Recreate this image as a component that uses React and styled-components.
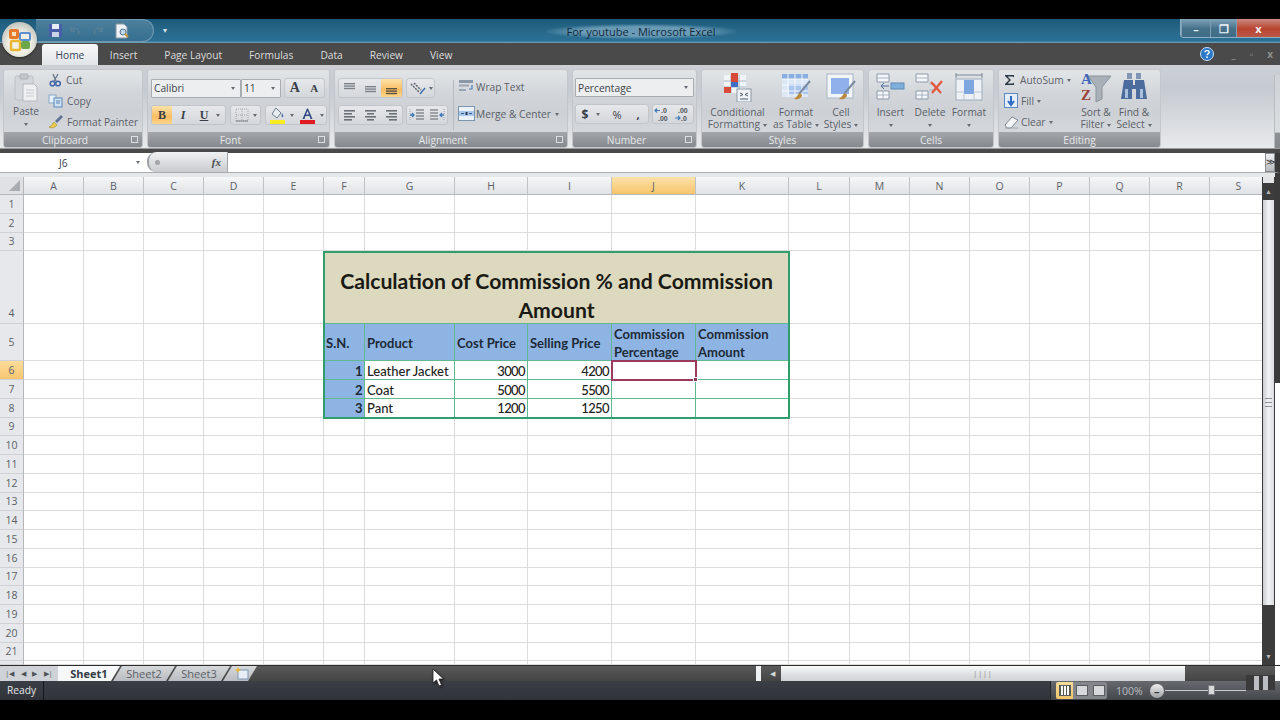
import styled, { createGlobalStyle, css } from "styled-components";

const GlobalStyle = createGlobalStyle`
  html, body {
    margin: 0;
    padding: 0;
    background: #000;
    overflow: hidden;
  }
  * {
    box-sizing: border-box;
  }
`;

const uiFont = `"Open Sans", "Noto Sans", "Liberation Sans", sans-serif`;
const cellFont = `Lato, "Open Sans", "Liberation Sans", sans-serif`;

const COLS = ["A", "B", "C", "D", "E", "F", "G", "H", "I", "J", "K", "L", "M", "N", "O", "P", "Q", "R", "S"];
const gridCols = "24px repeat(5, 60px) 41px 90px 73px 84px 84px 93px 61px repeat(5, 60px) 60px 58px";
const gridRows = "18px repeat(3, 18.75px) 72.5px 37.5px repeat(3, 18.75px) repeat(13, 18.75px) 3.75px";

const tableRows = {
  5: ["S.N.", "Product", "Cost Price", "Selling Price", "Commission Percentage", "Commission Amount"],
  6: ["1", "Leather Jacket", "3000", "4200", "", ""],
  7: ["2", "Coat", "5000", "5500", "", ""],
  8: ["3", "Pant", "1200", "1250", "", ""],
};

/* ---------- icons ---------- */

const OfficeLogo = () => (
  <svg width="26" height="26" viewBox="0 0 26 26">
    <rect x="2" y="2" width="10" height="10" rx="2" fill="#e8792b" />
    <rect x="13" y="6" width="10" height="7" rx="1" fill="none" stroke="#5b8fd0" strokeWidth="2" />
    <rect x="4" y="14" width="9" height="9" rx="1" fill="none" stroke="#e9b72f" strokeWidth="2.4" />
    <rect x="14" y="14" width="9" height="8" rx="2" fill="#6aa84a" />
    <rect x="5" y="5" width="4" height="4" fill="#f7e1c0" />
  </svg>
);

const SaveIcon = () => (
  <svg width="15" height="15" viewBox="0 0 15 15">
    <rect x="1" y="1" width="13" height="13" rx="1" fill="#4a5da8" />
    <rect x="4" y="1" width="7" height="5" fill="#e8ecf4" />
    <rect x="4" y="9" width="7" height="5" fill="#c9d2e6" />
  </svg>
);

const UndoIcon = ({ flip }) => (
  <svg width="14" height="14" viewBox="0 0 14 14" style={flip ? { transform: "scaleX(-1)" } : undefined}>
    <path d="M3 6c3-3 7-2 8 2l-1 3M3 3v4h4" fill="none" stroke="#5d8199" strokeWidth="1.5" />
  </svg>
);

const PreviewIcon = () => (
  <svg width="16" height="16" viewBox="0 0 16 16">
    <path d="M2 1h8l3 3v11H2z" fill="#eef2f6" stroke="#8a97a4" />
    <circle cx="9" cy="9" r="3" fill="#bcd6ea" stroke="#5b7388" />
    <path d="M11 11l3 3" stroke="#c89a3c" strokeWidth="2" />
  </svg>
);

const Caret = styled.span`
  display: inline-block;
  width: 0;
  height: 0;
  border-left: 2.5px solid transparent;
  border-right: 2.5px solid transparent;
  border-top: 3px solid #666c74;
  margin-left: ${(p) => p.$gap || 0}px;
  margin-top: ${(p) => p.$top || 0}px;
  vertical-align: middle;
`;

const PasteIcon = () => (
  <svg width="24" height="29" viewBox="0 0 24 29">
    <rect x="1" y="3" width="18" height="24" rx="2" fill="#d3d6da" stroke="#bcc0c5" />
    <rect x="6" y="1" width="8" height="5" rx="1" fill="#c3c6cb" stroke="#aeb2b7" />
    <path d="M9 11h11l3 3v14H9z" fill="#eef0f2" stroke="#b5b9be" />
    <path d="M12 17h8M12 20h8M12 23h8" stroke="#c6c9cd" />
  </svg>
);

const CutIcon = () => (
  <svg width="14" height="14" viewBox="0 0 14 14">
    <path d="M5 1l3 7M10 1L6 8" stroke="#6d7c8c" strokeWidth="1.4" />
    <circle cx="4.5" cy="10.5" r="2.3" fill="none" stroke="#4768a8" strokeWidth="1.6" />
    <circle cx="10" cy="10.5" r="2.3" fill="none" stroke="#4768a8" strokeWidth="1.6" />
  </svg>
);

const CopyIcon = () => (
  <svg width="15" height="14" viewBox="0 0 15 14">
    <rect x="1" y="1" width="7" height="8" fill="#e6f0fa" stroke="#8aa8c8" />
    <rect x="6" y="4" width="8" height="9" fill="#cfe0f2" stroke="#5c88b8" />
    <path d="M8 7h4M8 9h4" stroke="#5c88b8" />
  </svg>
);

const PainterIcon = () => (
  <svg width="15" height="15" viewBox="0 0 15 15">
    <path d="M1 13c3-.5 3-3 5-5l3 3c-2 2-4 4-8 2z" fill="#ecc948" stroke="#a88a2a" strokeWidth=".6" />
    <path d="M7 7l6-6 2 2-6 6z" fill="#5f7396" />
  </svg>
);

const BordersIcon = () => (
  <svg width="14" height="14" viewBox="0 0 14 14">
    <rect x="1" y="1" width="12" height="12" fill="none" stroke="#a3a8ae" strokeDasharray="1 1" />
    <path d="M7 1v12M1 7h12" stroke="#a3a8ae" strokeDasharray="1 1" />
    <path d="M1 13h12" stroke="#7d8288" />
  </svg>
);

const FillIcon = () => (
  <svg width="17" height="17" viewBox="0 0 17 17">
    <path d="M7 1l5 5-4 5-5-4z" fill="#e8edf2" stroke="#6b7a8a" />
    <path d="M13 6c1 2 2 3 1 4s-2-1-1-4z" fill="#4a6fa8" />
    <rect x="1" y="13" width="15" height="4" fill="#f6ec1e" />
  </svg>
);

const FontColorIcon = () => (
  <svg width="17" height="17" viewBox="0 0 17 17">
    <path d="M3.500 12L8 1.500h1L13.500 12h-2l-1-3h-4l-1 3zM7 7.500h3L8.500 4z" fill="#2f4a82" />
    <rect x="1" y="13" width="15" height="4" fill="#e01b24" />
  </svg>
);

const Lines = ({ kind }) => {
  const rows = {
    left: [[2, 11], [2, 8], [2, 11], [2, 8]],
    center: [[2, 11], [4, 7], [2, 11], [4, 7]],
    right: [[2, 11], [5, 8], [2, 11], [5, 8]],
  }[kind];
  return (
    <svg width="15" height="13" viewBox="0 0 15 13">
      {rows.map(([x, w], i) => (
        <rect key={i} x={x} y={1 + i * 3} width={w} height="1.6" fill="#6c7278" />
      ))}
    </svg>
  );
};

const VAlign = ({ at }) => (
  <svg width="15" height="13" viewBox="0 0 15 13">
    {[0, 1, 2].map((i) => (
      <rect key={i} x="2" y={at + i * 2.4} width="11" height="1.4" fill={at > 4 ? "#5b5340" : "#7c8288"} />
    ))}
  </svg>
);

const OrientIcon = () => (
  <svg width="18" height="15" viewBox="0 0 18 15">
    <path d="M2 3l8 8M5 2l7 7" stroke="#5f6670" strokeWidth="1.5" strokeDasharray="2 1" />
    <path d="M11 13l5-6" stroke="#3d6fb0" strokeWidth="1.4" />
  </svg>
);

const IndentIcon = ({ flip }) => (
  <svg width="16" height="14" viewBox="0 0 16 14" style={flip ? { transform: "scaleX(-1)" } : undefined}>
    <path d="M7 2h8M7 5h8M7 8h8M7 11h8" stroke="#5c6269" />
    <path d="M1 7h4M3 5l2 2-2 2" stroke="#3f79b8" fill="none" strokeWidth="1.3" />
    <path d="M1 1v12" stroke="#9aa0a6" strokeDasharray="1 1" />
  </svg>
);

const WrapIcon = () => (
  <svg width="17" height="15" viewBox="0 0 17 15">
    <rect x="1" y="1" width="14" height="3" fill="#8c98a8" />
    <rect x="1" y="5.5" width="10" height="2" fill="#9aa5b2" />
    <rect x="1" y="10" width="7" height="2" fill="#9aa5b2" />
    <path d="M11 10h3V6" fill="none" stroke="#4a7ab0" strokeWidth="1.2" />
  </svg>
);

const MergeIcon = () => (
  <svg width="17" height="15" viewBox="0 0 17 15">
    <rect x=".5" y=".5" width="16" height="14" fill="#eaf1f8" stroke="#7e94ac" />
    <rect x="1" y="5" width="15" height="5" fill="#a9c7e6" />
    <path d="M3 7.500h3M14 7.500h-3" stroke="#2c5c96" />
    <rect x="7.5" y="6" width="2" height="3" fill="#27394f" />
  </svg>
);

const DecIcon = ({ more }) => (
  <svg width="18" height="16" viewBox="0 0 18 16" fontFamily="Liberation Sans, sans-serif" fontSize="7" fontWeight="700" fill="#50565c">
    <text x={more ? 7 : 4} y="7">{more ? ".0" : ".00"}</text>
    <text x={more ? 4 : 7} y="15">{more ? ".00" : ".0"}</text>
    <path d={more ? "M1 4.500h5M3 2.500l-2 2 2 2" : "M1 12h5M4 10l2 2-2 2"} stroke="#3f79b8" fill="none" strokeWidth="1.2" />
  </svg>
);

const ConditionalIcon = () => (
  <svg width="30" height="30" viewBox="0 0 30 30">
    <path d="M1 3h22v18H1z" fill="#f1f4f8" />
    <path d="M1 9h22M1 15h22M8 3v18M16 3v18" stroke="#a9b6c6" />
    <rect x="8" y="1" width="7" height="9" fill="#d84a3a" />
    <rect x="8" y="10" width="7" height="5" fill="#3f6fc0" />
    <rect x="1" y="15" width="7" height="6" fill="#d84a3a" />
    <rect x="14" y="17" width="14" height="13" fill="#eef2f6" stroke="#8b98a6" />
    <path d="M17 21l3 1.500-3 1.500M25 21l-3 1.500 3 1.500M17 27h8" stroke="#4d5a68" fill="none" />
  </svg>
);

const TableIcon = () => (
  <svg width="30" height="30" viewBox="0 0 30 30">
    <rect x="1" y="2" width="26" height="23" fill="#dce8f6" />
    <rect x="1" y="2" width="26" height="5" fill="#8aaee0" />
    <rect x="8" y="12" width="19" height="10" fill="#a9c6ee" />
    <path d="M1 7h26M1 13h26M1 19h26M7 2v23M14 2v23M21 2v23" stroke="#f4f7fb" />
    <path d="M29 9L18 22" stroke="#7a8aa0" strokeWidth="2" />
    <path d="M19 21c-2 1-3 4-6 6 4 1 8-1 8-4z" fill="#b9893c" />
  </svg>
);

const CellStylesIcon = () => (
  <svg width="30" height="30" viewBox="0 0 30 30">
    <rect x="1" y="2" width="26" height="24" fill="#f2f5f9" stroke="#a9b6c6" />
    <rect x="5" y="6" width="18" height="16" fill="#8fb0ea" />
    <path d="M29 9L18 22" stroke="#7a8aa0" strokeWidth="2" />
    <path d="M19 21c-2 1-3 4-6 6 4 1 8-1 8-4z" fill="#b9893c" />
  </svg>
);

const InsertIcon = () => (
  <svg width="30" height="30" viewBox="0 0 30 30">
    <path d="M1 2h12v8H1zM1 19h12v8H1z" fill="#f4f6f9" stroke="#8d99a8" />
    <path d="M1 6h12M1 23h12M7 19v8" stroke="#a8b4c2" />
    <rect x="15" y="11" width="13" height="6" fill="#7fb0dc" stroke="#5c8bb8" />
    <path d="M5 14h8M8 11l-3 3 3 3" fill="none" stroke="#4c6f98" />
  </svg>
);

const DeleteIcon = () => (
  <svg width="30" height="30" viewBox="0 0 30 30">
    <path d="M1 2h12v8H1zM1 19h12v8H1z" fill="#f4f6f9" stroke="#8d99a8" />
    <path d="M1 6h12M1 23h12M7 19v8M14 12h6v6h-6" fill="none" stroke="#a8b4c2" />
    <path d="M16 10l10 11M27 9L17 21" stroke="#e4573d" strokeWidth="2.2" />
  </svg>
);

const FormatIcon = () => (
  <svg width="30" height="30" viewBox="0 0 30 30">
    <path d="M2 1v5M28 1v5M2 3h26" stroke="#7b8896" fill="none" />
    <rect x="2" y="7" width="26" height="21" fill="#eef2f7" stroke="#9eabba" />
    <rect x="10" y="8" width="10" height="14" fill="#7da5de" />
    <path d="M2 20h8M20 20h8M10 22v6M20 22v6" stroke="#b8c3d0" />
  </svg>
);

const SigmaIcon = () => (
  <svg width="11" height="12" viewBox="0 0 11 12">
    <path d="M1 1h9v2.500L9 2.500H3.500L7 6l-3.500 3.500H9l1-1.200V11H1v-1l4-4-4-4z" fill="#2c3640" />
  </svg>
);

const FillDownIcon = () => (
  <svg width="14" height="15" viewBox="0 0 14 15">
    <rect x=".5" y=".5" width="13" height="14" fill="#e4eefa" stroke="#5d8ac2" />
    <path d="M7 3v7M4 8l3 4 3-4" fill="none" stroke="#2c6cc4" strokeWidth="2" />
  </svg>
);

const EraserIcon = () => (
  <svg width="15" height="14" viewBox="0 0 15 14">
    <path d="M1 10l7-8 6 3-7 8H3z" fill="#f4f5f7" stroke="#7c8792" />
    <path d="M1 13h13" stroke="#a1a8b0" />
  </svg>
);

const SortIcon = () => (
  <svg width="32" height="32" viewBox="0 0 32 32">
    <path d="M8 5h23l-9 11v12l-6 3V16z" fill="#a9b0b8" stroke="#8d949c" />
    <text x="1" y="13" fontFamily="Liberation Serif, serif" fontWeight="700" fontSize="15" fill="#3e67b8">A</text>
    <text x="1" y="29" fontFamily="Liberation Serif, serif" fontWeight="700" fontSize="15" fill="#9c4238">Z</text>
  </svg>
);

const BinocularsIcon = () => (
  <svg width="28" height="30" viewBox="0 0 28 30">
    <path d="M7 1h5v6H7zM16 1h5v6h-5z" fill="#8196b4" />
    <path d="M4 8h9v5h2V8h9l3 19H16V17h-4v10H1z" fill="#4b6c9c" />
    <rect x="5" y="17" width="3" height="9" fill="#a8c0de" />
    <rect x="20" y="17" width="3" height="9" fill="#a8c0de" />
  </svg>
);

const HelpIcon = () => (
  <svg width="14" height="14" viewBox="0 0 14 14">
    <circle cx="7" cy="7" r="6.500" fill="#2a78c8" stroke="#c5def6" />
    <path d="M5 5.300c0-2.300 4.200-2.300 4.200 0 0 1.600-2.200 1.400-2.200 3" fill="none" stroke="#fff" strokeWidth="1.400" />
    <rect x="6.2" y="9.4" width="1.6" height="1.6" fill="#fff" />
  </svg>
);

const NewSheetIcon = () => (
  <svg width="14" height="13" viewBox="0 0 14 13">
    <rect x="3" y="3" width="10" height="9" fill="#e8eef6" stroke="#7f97b8" />
    <path d="M3 0l1 2 2 1-2 1-1 2-1-2-2-1 2-1z" fill="#e8b83a" />
  </svg>
);

const ArrowCursor = styled.svg`
  position: absolute;
  left: 432px;
  top: 668px;
  filter: drop-shadow(1px 1px 1px rgba(0, 0, 0, 0.5));
`;

/* ---------- window chrome ---------- */

const Screen = styled.div`
  position: relative;
  width: 1280px;
  height: 720px;
  background: #000;
  overflow: hidden;
  display: flex;
  flex-direction: column;
  font-family: ${uiFont};
`;

const BlackBar = styled.div`
  flex: none;
  height: ${(p) => p.$h}px;
  background: #000;
`;

const TitleBar = styled.div`
  flex: none;
  height: 24px;
  display: flex;
  align-items: center;
  background: linear-gradient(180deg, #1c5a7a 0%, #28698b 55%, #2a7096 92%, #7fa9bf 100%);
  padding-left: 36px;
`;

const QuickAccess = styled.div`
  flex: none;
  width: 118px;
  height: 23px;
  margin-top: -1px;
  display: flex;
  align-items: center;
  gap: 5px;
  padding-left: 12px;
  background: linear-gradient(180deg, #4d7f9c, #356f90);
  border-radius: 0 13px 13px 0;
  border: 1px solid #6f9ab2;
  border-left: none;

  & > svg:nth-child(2),
  & > svg:nth-child(3) {
    opacity: 0.75;
    margin-right: 4px;
  }
`;

const QuickMenu = styled.div`
  flex: none;
  width: 22px;
  text-align: center;
  color: #d6e2ea;
  font-size: 8px;
  line-height: 8px;
  margin-top: -2px;
`;

const WindowTitle = styled.div`
  flex: none;
  width: 190px;
  margin-left: 370px;
  text-align: center;
  font-size: 11px;
  color: #14293a;
  background: radial-gradient(ellipse at center, rgba(150, 190, 212, 0.6) 45%, rgba(150, 190, 212, 0) 74%);
  white-space: nowrap;
`;

const WindowButtons = styled.div`
  margin-left: auto;
  align-self: flex-start;
  display: flex;
  height: 19px;
  border: 1px solid #8fb0c4;
  border-top: none;
  border-right: none;
  border-radius: 0 0 0 4px;
  overflow: hidden;
`;

const WindowButton = styled.div`
  width: ${(p) => p.$w}px;
  display: flex;
  align-items: center;
  justify-content: center;
  color: #eef2f5;
  font-size: 11px;
  font-weight: 700;
  background: ${(p) =>
    p.$close
      ? "linear-gradient(180deg, #c98a80, #b9432f 55%, #b85a48)"
      : "linear-gradient(180deg, #7fa3b8, #45708a 55%, #3f6c86)"};
  border-left: 1px solid #7fa0b4;
`;

const TabBar = styled.div`
  flex: none;
  height: 22px;
  display: flex;
  align-items: flex-end;
  background: #4a4a4a;
  padding-left: 42px;
`;

const Tab = styled.div`
  padding: 0 13.5px;
  height: 21px;
  line-height: 22px;
  font-size: 10.2px;
  color: #dcdcdc;
  ${(p) =>
    p.$active &&
    css`
      color: #37465a;
      background: linear-gradient(180deg, #f7f8f9, #e2e5e8);
      border-radius: 3px 3px 0 0;
      margin-right: -1.5px;
    `}
`;

const TabTools = styled.div`
  margin-left: auto;
  display: flex;
  align-items: center;
  gap: 14px;
  height: 22px;
  padding-right: 7px;
  color: #8e8e8e;
  font-size: 10px;
  font-weight: 700;

  & > svg {
    margin-right: 4px;
  }
`;

const Ribbon = styled.div`
  flex: none;
  height: 84px;
  display: flex;
  gap: 4px;
  padding: 4px 0 0 3px;
  background: linear-gradient(180deg, #ccd0d5 0%, #c6cbd1 30%, #e8eaec 100%);
  border-bottom: 1px solid #9a9da1;
`;

const Group = styled.div`
  flex: none;
  width: ${(p) => p.$w}px;
  height: 79px;
  display: flex;
  flex-direction: column;
  border-radius: 3px;
  overflow: hidden;
  border: 1px solid #c3c7cc;
  background: linear-gradient(180deg, #e2e5e8 0%, #d2d6da 30%, #cdd1d5 55%, #dadde0 100%);
`;

const GroupBody = styled.div`
  flex: 1;
  display: flex;
  min-height: 0;
  padding: ${(p) => p.$pad || "0"};
  gap: ${(p) => p.$gap || 0}px;
`;

const GroupLabel = styled.div`
  position: relative;
  flex: none;
  height: 15px;
  line-height: 16px;
  padding-right: ${(p) => (p.$launcher ? 16 : 0)}px;
  text-align: center;
  font-size: 10.2px;
  color: #e6e8ea;
  background: linear-gradient(180deg, #a3a7ab, #85898e);
`;

const Launcher = styled.span`
  position: absolute;
  right: 4px;
  top: 4px;
  width: 7px;
  height: 7px;
  border: 1px solid #dcdfe2;
  background: #8f9499;
`;

const RibbonEdge = styled.div`
  margin-left: auto;
  width: 6px;
  height: 73px;
  margin-top: 6px;
  border-left: 1px solid #b9bdc2;
  background: linear-gradient(180deg, #cfd3d7 0%, #dadde0 78%, #8d9195 80%, #85898e 100%);
`;

const Stack = styled.div`
  display: flex;
  flex-direction: column;
  gap: ${(p) => p.$gap || 0}px;
  margin-top: ${(p) => p.$top || 0}px;
`;

const Row = styled.div`
  display: flex;
  align-items: center;
  gap: ${(p) => p.$gap || 0}px;
`;

const ToolText = styled.span`
  font-size: 10.2px;
  line-height: 12px;
  color: #5b6068;
  white-space: nowrap;
  margin-top: ${(p) => p.$top || 0}px;
`;

const SmallTool = styled.div`
  display: flex;
  align-items: center;
  height: 21px;
  gap: ${(p) => p.$gap ?? 4}px;
  width: ${(p) => (p.$w ? `${p.$w}px` : "auto")};
  & > svg {
    flex: none;
  }
`;

const BigTool = styled.div`
  flex: none;
  width: ${(p) => p.$w}px;
  display: flex;
  flex-direction: column;
  align-items: center;
  padding-top: ${(p) => p.$top ?? 2}px;
`;

const BigIconSlot = styled.div`
  height: 30px;
  display: flex;
  align-items: center;
  justify-content: center;
`;

const BigLabel = styled.div`
  margin-top: 4px;
  font-size: 10.2px;
  line-height: 12px;
  color: #5b6068;
  text-align: center;
  white-space: nowrap;
`;

const ComboBox = styled.div`
  width: ${(p) => p.$w}px;
  height: 19px;
  flex: none;
  display: flex;
  align-items: center;
  justify-content: space-between;
  padding: 0 5px 0 2px;
  font-size: 10.2px;
  color: #3d434a;
  border: 1px solid #a9adb2;
  background: #eceef0;
  border-radius: 1px;
`;

const ButtonCluster = styled.div`
  display: flex;
  align-items: stretch;
  height: 20px;
  width: ${(p) => (p.$w ? `${p.$w}px` : "auto")};
  margin-left: ${(p) => p.$ml || 0}px;
  border: 1px solid #c2c6cb;
  border-radius: 3px;
  background: linear-gradient(180deg, #e6e8eb, #d4d7db);
  overflow: hidden;
`;

const ClusterButton = styled.div`
  flex: ${(p) => (p.$w ? "none" : "1")};
  width: ${(p) => (p.$w ? `${p.$w}px` : "auto")};
  display: flex;
  align-items: center;
  justify-content: center;
  gap: 2px;
  font-size: ${(p) => p.$size || 11}px;
  font-weight: ${(p) => (p.$bold ? 700 : 400)};
  font-style: ${(p) => (p.$italic ? "italic" : "normal")};
  text-decoration: ${(p) => (p.$under ? "underline" : "none")};
  font-family: ${(p) => (p.$serif ? `"Liberation Serif", serif` : "inherit")};
  color: #3a4048;
  ${(p) =>
    p.$on &&
    css`
      background: linear-gradient(180deg, #fde3a8, #f9bd62 60%, #fbd58c);
    `}
`;

const GroupDivider = styled.div`
  width: 1px;
  height: 50px;
  margin: 2px 4px 0 5px;
  background: #b7bbc0;
`;

/* ---------- formula bar ---------- */

const DarkStrip = styled.div`
  flex: none;
  height: 4px;
  background: #4a4a4a;
`;

const FormulaBar = styled.div`
  flex: none;
  height: 20px;
  display: flex;
  background: #fff;
  border-bottom: 1px solid #a9abae;
  border-right: 5px solid #3a3a3a;
`;

const NameBox = styled.div`
  width: 147px;
  display: flex;
  align-items: center;
  justify-content: space-between;
  padding: 0 7px 0 59px;
  font-size: 10.2px;
  color: #3d434a;
`;

const FxBox = styled.div`
  width: 81px;
  margin-top: -1px;
  display: flex;
  align-items: center;
  justify-content: space-between;
  padding: 0 6px;
  background: linear-gradient(180deg, #f0f1f2, #c9cbce);
  border-radius: 9px 0 0 9px;
  border-left: 2px solid #9da1a5;
  border-right: 1px solid #a4a7aa;
  font-family: "Liberation Serif", serif;
  font-style: italic;
  font-weight: 700;
  font-size: 11px;
  color: #454a50;

  &::before {
    content: "";
    width: 5px;
    height: 5px;
    border-radius: 50%;
    background: #a3a6a9;
  }
`;

const FormulaInput = styled.div`
  flex: 1;
`;

const FormulaExpand = styled.div`
  flex: none;
  width: 10px;
  background: linear-gradient(180deg, #f0f1f2, #b7babd);
  border: 1px solid #8a8d91;
  font-size: 9px;
  line-height: 15px;
  text-align: center;
  color: #333;
`;

const HeaderGap = styled.div`
  flex: none;
  height: 4px;
  background: #e6e7e9;
  border-right: 5px solid #3a3a3a;
`;

/* ---------- sheet ---------- */

const SheetArea = styled.div`
  flex: none;
  height: 488px;
  display: flex;
  background: #fff;
`;

const SheetStack = styled.div`
  flex: none;
  width: 1262px;
  display: grid;
  overflow: hidden;
`;

const CellGrid = styled.div`
  grid-area: 1 / 1;
  display: grid;
  grid-template-columns: ${gridCols};
  grid-template-rows: ${gridRows};
  font-family: ${cellFont};
`;

const FrameGrid = styled(CellGrid)`
  pointer-events: none;
`;

const TableFrame = styled.div`
  grid-column: 7 / 13;
  grid-row: 5 / 10;
  margin: 0 -1px -1px -1px;
  border: 2px solid #2f9e6c;
`;

const SelectedFrame = styled.div`
  position: relative;
  grid-column: 11 / 12;
  grid-row: 7 / 8;
  margin: -1px;
  border: 2px solid #9a3b5e;
`;

const FillHandle = styled.span`
  position: absolute;
  right: -3px;
  bottom: -3px;
  width: 5px;
  height: 5px;
  background: #8a3556;
  border: 1px solid #fff;
`;

const Corner = styled.div`
  background: #dfe1e4;
  border-right: 1px solid #b4b6b9;
  border-bottom: 1px solid #b4b6b9;
  display: flex;
  align-items: flex-end;
  justify-content: flex-end;
  padding: 0 3px 3px 0;

  &::after {
    content: "";
    width: 0;
    height: 0;
    border-left: 11px solid transparent;
    border-bottom: 11px solid #a9acb0;
  }
`;

const ColHead = styled.div`
  display: flex;
  align-items: center;
  justify-content: center;
  font-family: ${uiFont};
  font-size: 10.5px;
  color: #5c6168;
  border-right: 1px solid #bfc1c4;
  border-bottom: 1px solid #b4b6b9;
  background: ${(p) =>
    p.$on
      ? "linear-gradient(180deg, #fbe2a8, #f7c46c)"
      : "linear-gradient(180deg, #f6f7f8, #e0e2e5)"};
`;

const RowHead = styled.div`
  display: flex;
  align-items: ${(p) => (p.$low ? "flex-end" : "center")};
  justify-content: center;
  padding-bottom: ${(p) => (p.$low ? 3 : 0)}px;
  font-family: ${uiFont};
  font-size: 10.5px;
  color: #5c6168;
  border-right: 1px solid #b4b6b9;
  border-bottom: 1px solid #cfd1d4;
  background: ${(p) => (p.$on ? "linear-gradient(180deg, #fbdc9a, #f8c670)" : "#e6e8eb")};
`;

const Cell = styled.div`
  min-width: 0;
  border-right: 1px solid #dcdcdc;
  border-bottom: 1px solid #dcdcdc;
`;

const TableCell = styled.div`
  min-width: 0;
  display: flex;
  align-items: center;
  justify-content: ${(p) => (p.$num ? "flex-end" : "flex-start")};
  padding: 2px 2px 0;
  font-size: 13px;
  line-height: 18.5px;
  font-weight: ${(p) => (p.$bold ? 700 : 500)};
  letter-spacing: ${(p) => (p.$num ? "-0.6px" : "0")};
  color: ${(p) => (p.$bold ? "#1d2a38" : "#222")};
  background: ${(p) => (p.$blue ? "#8db4e2" : "#fff")};
  border-right: 1px solid #62b98f;
  border-bottom: 1px solid #62b98f;
  white-space: ${(p) => (p.$wrapped ? "normal" : "nowrap")};
`;

const TitleCell = styled.div`
  grid-column: span 6;
  display: flex;
  align-items: center;
  justify-content: center;
  padding: 18px 14px 0;
  text-align: center;
  font-size: 21.2px;
  line-height: 29px;
  font-weight: 700;
  color: #1a1a14;
  background: #dcd9bf;
  border-bottom: 1px solid #62b98f;
`;

/* ---------- scrollbars and status ---------- */

const VScroll = styled.div`
  flex: none;
  width: 13px;
  display: flex;
  flex-direction: column;
  background: #3c3c3c;
`;

const ScrollSplit = styled.div`
  flex: none;
  height: 6px;
  margin: 0 1px;
  background: #e4e5e7;
`;

const ScrollArrow = styled.div`
  flex: none;
  height: 17px;
  display: flex;
  align-items: center;
  justify-content: center;
  color: #b6b8bb;
  font-size: 7px;
`;

const VThumb = styled.div`
  flex: none;
  height: 405px;
  margin: 0 1px;
  display: flex;
  align-items: center;
  justify-content: center;
  background: linear-gradient(90deg, #c9ccd0, #f2f3f4 50%, #d9dbde);

  &::after {
    content: "";
    width: 7px;
    height: 7px;
    border-top: 1px solid #8e9195;
    border-bottom: 1px solid #8e9195;
    background: linear-gradient(#fff0 40%, #8e9195 40%, #8e9195 60%, #fff0 60%);
  }
`;

const VRest = styled.div`
  flex: 1;
  display: flex;
  align-items: flex-end;
  justify-content: center;
`;

const SideEdge = styled.div`
  flex: none;
  width: 5px;
  display: flex;
  flex-direction: column;
`;

const EdgeDark = styled.div`
  height: 206px;
  background: #3a3a3a;
`;

const EdgeLight = styled.div`
  flex: 1;
  background: #fff;
`;

const SheetTabsRow = styled.div`
  flex: none;
  height: 16px;
  display: flex;
  align-items: stretch;
  background: linear-gradient(180deg, #5a5a5a, #444);
  border-top: 1px solid #2c2c2c;
`;

const TabNav = styled.div`
  width: 58px;
  display: flex;
  align-items: center;
  justify-content: space-around;
  padding: 0 2px;
  background: #cfd2d6;
  font-size: 7px;
  color: #4e5358;
`;

const SheetTab = styled.div`
  display: flex;
  align-items: center;
  justify-content: center;
  width: ${(p) => p.$w}px;
  padding-left: ${(p) => p.$pl || 0}px;
  margin-right: -7px;
  font-size: 11px;
  font-weight: ${(p) => (p.$active ? 700 : 400)};
  color: ${(p) => (p.$active ? "#333b44" : "#5b6168")};
  background: ${(p) => (p.$active ? "#f6f7f8" : "linear-gradient(180deg, #d6d8db, #b9bcc0)")};
  clip-path: polygon(0 0, 100% 0, calc(100% - 9px) 100%, 0 100%);
  position: relative;
  z-index: ${(p) => (p.$active ? 2 : 1)};
  ${(p) =>
    !p.$active &&
    css`
      clip-path: polygon(9px 0, 100% 0, calc(100% - 9px) 100%, 0 100%);
    `}
`;

const TabSpacer = styled.div`
  width: ${(p) => p.$w}px;
  flex: none;
`;

const HSplitter = styled.div`
  flex: none;
  width: 5px;
  margin: 0 3px;
  background: #f0f1f2;
`;

const HArrow = styled.div`
  flex: none;
  width: 17px;
  display: flex;
  align-items: center;
  justify-content: center;
  color: #d6d8da;
  font-size: 7px;
`;

const HThumb = styled.div`
  flex: none;
  width: 404px;
  display: flex;
  align-items: center;
  justify-content: center;
  background: linear-gradient(180deg, #fafafa, #dcdee0 60%, #cfd1d4);
  color: #7f8387;
  font-size: 7px;
  letter-spacing: 1px;
`;

const HRest = styled.div`
  flex: 1;
`;

const StatusBar = styled.div`
  flex: none;
  height: 19px;
  display: flex;
  align-items: stretch;
  background: linear-gradient(180deg, #3a3f45, #30343a);
`;

const StatusText = styled.div`
  width: 44px;
  padding-left: 7px;
  line-height: 19px;
  font-size: 10.2px;
  color: #e3e5e7;
  border-right: 1px solid #14171a;
`;

const StatusRight = styled.div`
  margin-left: auto;
  width: 230px;
  display: flex;
  align-items: center;
  padding-left: 5px;
  gap: 9px;
  background: linear-gradient(180deg, #66696d, #43474c);
  border-left: 1px solid #22262a;
`;

const ViewButtons = styled.div`
  display: flex;
  height: 17px;
  border-radius: 2px;
  overflow: hidden;
  background: #83868a;
`;

const ViewButton = styled.div`
  width: 17px;
  display: flex;
  align-items: center;
  justify-content: center;
  background: ${(p) => (p.$on ? "linear-gradient(180deg, #f6dc9a, #eec468)" : "transparent")};

  &::after {
    content: "";
    width: 10px;
    height: 9px;
    background: ${(p) => (p.$on ? "repeating-linear-gradient(90deg, #5c5a4a 0 1px, #fff 1px 3px)" : "#d6d8da")};
    border: 1px solid #595c60;
  }
`;

const ZoomText = styled.div`
  font-size: 10.5px;
  color: #b9bcbf;
`;

const ZoomButton = styled.div`
  width: 14px;
  height: 14px;
  margin-left: -2px;
  border-radius: 50%;
  display: flex;
  align-items: center;
  justify-content: center;
  background: linear-gradient(180deg, #eee, #9fa2a6);
  color: #333;
  font-size: 11px;
  line-height: 12px;
  font-weight: 700;
`;

const ZoomTrack = styled.div`
  position: relative;
  flex: 1;
  height: 1px;
  margin: 0 -9px 0 -8px;
  background: #c7c9cc;
`;

const ZoomThumb = styled.span`
  position: absolute;
  left: 43px;
  top: -5px;
  width: 7px;
  height: 10px;
  background: #d6d8da;
  border: 1px solid #797c80;
  border-radius: 1px;
`;

const PauseBlock = styled.div`
  flex: none;
  align-self: flex-start;
  width: 29px;
  height: 15px;
  margin: -6px 5px 0 0;
  display: flex;
  align-items: center;
  justify-content: center;
  gap: 4px;
  background: #3a3a3a;

  &::before,
  &::after {
    content: "";
    width: 5px;
    height: 14px;
    background: #bcbec1;
  }
`;

const OfficeButton = styled.div`
  position: absolute;
  left: 2px;
  top: 22px;
  width: 35px;
  height: 35px;
  border-radius: 50%;
  display: flex;
  align-items: center;
  justify-content: center;
  background: radial-gradient(circle at 50% 60%, #f2f0e6 40%, #b9bcb8 80%, #727a7e 100%);
  box-shadow: 0 1px 2px rgba(0, 0, 0, 0.5);
`;

/* ---------- parts ---------- */

const SheetCells = () => {
  const cells = [];
  const rows = Array.from({ length: 22 }, (_, i) => i + 1);

  cells.push(<Corner key="corner" />);
  COLS.forEach((c) => cells.push(<ColHead key={c} $on={c === "J"}>{c}</ColHead>));

  rows.forEach((r) => {
    cells.push(
      <RowHead key={`h${r}`} $on={r === 6} $low={r === 4}>
        {r < 22 ? r : ""}
      </RowHead>
    );
    COLS.forEach((c, i) => {
      const inTable = i >= 5 && i <= 10;
      if (r === 4 && c === "F") {
        cells.push(<TitleCell key="title">Calculation of Commission % and Commission Amount</TitleCell>);
      } else if (r === 4 && inTable) {
        // covered by the merged title
      } else if (r === 5 && inTable) {
        cells.push(
          <TableCell key={`${c}${r}`} $blue $bold $wrapped={i > 8}>
            {tableRows[5][i - 5]}
          </TableCell>
        );
      } else if (r > 5 && r <= 8 && inTable) {
        const col = i - 5;
        cells.push(
          <TableCell key={`${c}${r}`} $blue={col === 0} $bold={col === 0} $num={col === 0 || col === 2 || col === 3}>
            {tableRows[r][col]}
          </TableCell>
        );
      } else {
        cells.push(<Cell key={`${c}${r}`} />);
      }
    });
  });

  return <CellGrid>{cells}</CellGrid>;
};

const Big = ({ w, icon, lines }) => (
  <BigTool $w={w}>
    <BigIconSlot>{icon}</BigIconSlot>
    <BigLabel>
      {lines[0]}
      <br />
      {lines[1]}
      <Caret $gap={lines[1] ? 3 : 0} />
    </BigLabel>
  </BigTool>
);

const App = () => (
  <Screen>
    <GlobalStyle />
    <BlackBar $h={19} />

    <TitleBar>
      <QuickAccess>
        <SaveIcon />
        <UndoIcon />
        <UndoIcon flip />
        <PreviewIcon />
      </QuickAccess>
      <QuickMenu>▾</QuickMenu>
      <WindowTitle>For youtube - Microsoft Excel</WindowTitle>
      <WindowButtons>
        <WindowButton $w={29}>–</WindowButton>
        <WindowButton $w={26}>❐</WindowButton>
        <WindowButton $w={44} $close>x</WindowButton>
      </WindowButtons>
    </TitleBar>

    <TabBar>
      <Tab $active>Home</Tab>
      <Tab>Insert</Tab>
      <Tab>Page Layout</Tab>
      <Tab>Formulas</Tab>
      <Tab>Data</Tab>
      <Tab>Review</Tab>
      <Tab>View</Tab>
      <TabTools>
        <HelpIcon />
        <span>_</span>
        <span>▫</span>
        <span>x</span>
      </TabTools>
    </TabBar>

    <Ribbon>
      <Group $w={140}>
        <GroupBody>
          <BigTool $w={44} $top={3}>
            <PasteIcon />
            <ToolText $top={3}>Paste</ToolText>
            <Caret $top={6} />
          </BigTool>
          <Stack $top={-1}>
            <SmallTool><CutIcon /><ToolText>Cut</ToolText></SmallTool>
            <SmallTool><CopyIcon /><ToolText>Copy</ToolText></SmallTool>
            <SmallTool><PainterIcon /><ToolText>Format Painter</ToolText></SmallTool>
          </Stack>
        </GroupBody>
        <GroupLabel $launcher>Clipboard<Launcher /></GroupLabel>
      </Group>

      <Group $w={183}>
        <GroupBody $pad="8px 3px 0 3px">
          <Stack $gap={7}>
            <Row>
              <ComboBox $w={90}>Calibri<Caret /></ComboBox>
              <ComboBox $w={40}>11<Caret /></ComboBox>
              <ButtonCluster $w={41} $ml={3}>
                <ClusterButton $serif $bold $size={14}>A</ClusterButton>
                <ClusterButton $serif $bold $size={11}>A</ClusterButton>
              </ButtonCluster>
            </Row>
            <Row>
              <ButtonCluster $w={75}>
                <ClusterButton $w={20} $on $serif $bold $size={12}>B</ClusterButton>
                <ClusterButton $w={22} $serif $italic $bold $size={12}>I</ClusterButton>
                <ClusterButton $w={32} $serif $bold $under $size={12}>U<Caret $gap={6} /></ClusterButton>
              </ButtonCluster>
              <ButtonCluster $w={31} $ml={4}>
                <ClusterButton><BordersIcon /><Caret $gap={2} /></ClusterButton>
              </ButtonCluster>
              <ButtonCluster $w={62} $ml={4}>
                <ClusterButton><FillIcon /><Caret $gap={2} /></ClusterButton>
                <ClusterButton><FontColorIcon /><Caret $gap={2} /></ClusterButton>
              </ButtonCluster>
            </Row>
          </Stack>
        </GroupBody>
        <GroupLabel $launcher>Font<Launcher /></GroupLabel>
      </Group>

      <Group $w={234}>
        <GroupBody $pad="8px 4px 0 3px">
          <Stack $gap={7}>
            <Row>
              <ButtonCluster $w={65}>
                <ClusterButton><VAlign at={1} /></ClusterButton>
                <ClusterButton><VAlign at={4} /></ClusterButton>
                <ClusterButton $on><VAlign at={6} /></ClusterButton>
              </ButtonCluster>
              <ButtonCluster $w={29} $ml={3}>
                <ClusterButton><OrientIcon /><Caret /></ClusterButton>
              </ButtonCluster>
            </Row>
            <Row>
              <ButtonCluster $w={65}>
                <ClusterButton><Lines kind="left" /></ClusterButton>
                <ClusterButton><Lines kind="center" /></ClusterButton>
                <ClusterButton><Lines kind="right" /></ClusterButton>
              </ButtonCluster>
              <ButtonCluster $w={42} $ml={3}>
                <ClusterButton><IndentIcon /></ClusterButton>
                <ClusterButton><IndentIcon flip /></ClusterButton>
              </ButtonCluster>
            </Row>
          </Stack>
          <GroupDivider />
          <Stack $gap={6} $top={-2}>
            <SmallTool $gap={1}><WrapIcon /><ToolText>Wrap Text</ToolText></SmallTool>
            <SmallTool $gap={1}><MergeIcon /><ToolText>Merge &amp; Center<Caret $gap={4} /></ToolText></SmallTool>
          </Stack>
        </GroupBody>
        <GroupLabel $launcher>Alignment<Launcher /></GroupLabel>
      </Group>

      <Group $w={125}>
        <GroupBody $pad="8px 3px 0 2px">
          <Stack $gap={7}>
            <ComboBox $w={119}>Percentage<Caret /></ComboBox>
            <Row>
              <ButtonCluster $w={74}>
                <ClusterButton $w={30} $bold $size={12}>$<Caret $gap={6} /></ClusterButton>
                <ClusterButton $w={22}>%</ClusterButton>
                <ClusterButton $w={20} $bold>,</ClusterButton>
              </ButtonCluster>
              <ButtonCluster $w={42} $ml={3}>
                <ClusterButton><DecIcon more /></ClusterButton>
                <ClusterButton><DecIcon /></ClusterButton>
              </ButtonCluster>
            </Row>
          </Stack>
        </GroupBody>
        <GroupLabel $launcher>Number<Launcher /></GroupLabel>
      </Group>

      <Group $w={163}>
        <GroupBody $pad="0 0 0 1px">
          <Big w={69} icon={<ConditionalIcon />} lines={["Conditional", "Formatting"]} />
          <Big w={48} icon={<TableIcon />} lines={["Format", "as Table"]} />
          <Big w={42} icon={<CellStylesIcon />} lines={["Cell", "Styles"]} />
        </GroupBody>
        <GroupLabel>Styles</GroupLabel>
      </Group>

      <Group $w={126}>
        <GroupBody $pad="0 1px">
          <Big w={41} icon={<InsertIcon />} lines={["Insert", ""]} />
          <Big w={38} icon={<DeleteIcon />} lines={["Delete", ""]} />
          <Big w={40} icon={<FormatIcon />} lines={["Format", ""]} />
        </GroupBody>
        <GroupLabel>Cells</GroupLabel>
      </Group>

      <Group $w={163}>
        <GroupBody $pad="0 0 0 5px">
          <Stack $top={-1}>
            <SmallTool $w={74} $gap={5}><SigmaIcon /><ToolText>AutoSum<Caret $gap={3} /></ToolText></SmallTool>
            <SmallTool $w={74} $gap={3}><FillDownIcon /><ToolText>Fill<Caret $gap={3} /></ToolText></SmallTool>
            <SmallTool $w={74} $gap={2}><EraserIcon /><ToolText>Clear<Caret $gap={3} /></ToolText></SmallTool>
          </Stack>
          <Big w={36} icon={<SortIcon />} lines={["Sort &", "Filter"]} />
          <Big w={40} icon={<BinocularsIcon />} lines={["Find &", "Select"]} />
        </GroupBody>
        <GroupLabel>Editing</GroupLabel>
      </Group>

      <RibbonEdge />
    </Ribbon>

    <DarkStrip />

    <FormulaBar>
      <NameBox>J6<Caret /></NameBox>
      <FxBox>fx</FxBox>
      <FormulaInput />
      <FormulaExpand>≫</FormulaExpand>
    </FormulaBar>

    <HeaderGap />

    <SheetArea>
      <SheetStack>
        <SheetCells />
        <FrameGrid>
          <TableFrame />
          <SelectedFrame><FillHandle /></SelectedFrame>
        </FrameGrid>
      </SheetStack>
      <VScroll>
        <ScrollSplit />
        <ScrollArrow>▲</ScrollArrow>
        <VThumb />
        <VRest><ScrollArrow>▼</ScrollArrow></VRest>
      </VScroll>
      <SideEdge>
        <EdgeDark />
        <EdgeLight />
      </SideEdge>
    </SheetArea>

    <SheetTabsRow>
      <TabNav>
        <span>|◀</span>
        <span>◀</span>
        <span>▶</span>
        <span>▶|</span>
      </TabNav>
      <SheetTab $active $w={62}>Sheet1</SheetTab>
      <SheetTab $w={62}>Sheet2</SheetTab>
      <SheetTab $w={62}>Sheet3</SheetTab>
      <SheetTab $w={34} $pl={4}><NewSheetIcon /></SheetTab>
      <TabSpacer $w={503} />
      <HSplitter />
      <HArrow>◀</HArrow>
      <HThumb>||||</HThumb>
      <HRest />
      <SideEdge><EdgeLight /></SideEdge>
    </SheetTabsRow>

    <StatusBar>
      <StatusText>Ready</StatusText>
      <StatusRight>
        <ViewButtons>
          <ViewButton $on />
          <ViewButton />
          <ViewButton />
        </ViewButtons>
        <ZoomText>100%</ZoomText>
        <ZoomButton>–</ZoomButton>
        <ZoomTrack><ZoomThumb /></ZoomTrack>
        <PauseBlock />
      </StatusRight>
    </StatusBar>

    <BlackBar $h={20} />

    <OfficeButton><OfficeLogo /></OfficeButton>

    <ArrowCursor width="12" height="19" viewBox="0 0 12 19">
      <path d="M1 1v14l3.500-3 2.500 6 2.500-1-2.500-6h4.500z" fill="#fff" stroke="#222" strokeWidth=".8" />
    </ArrowCursor>
  </Screen>
);

export default App;
